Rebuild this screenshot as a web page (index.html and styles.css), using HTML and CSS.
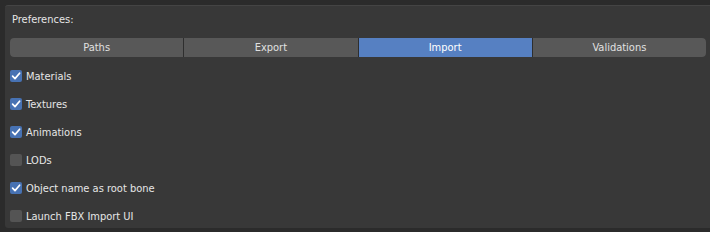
FILE: index.html
```html
<!DOCTYPE html>
<html lang="en">
<head>
    <meta charset="UTF-8">
    <title>Preferences</title>
    <link rel="stylesheet" href="styles.css">
</head>
<body>
    <div class="panel">
        <div class="title">Preferences:</div>
        <div class="tabs">
            <div class="tab">Paths</div>
            <div class="tab">Export</div>
            <div class="tab active">Import</div>
            <div class="tab">Validations</div>
        </div>
        <div class="options">
            <label class="option"><span class="box checked"><svg viewBox="0 0 12 12"><path d="M2.6 6.2 L5 8.6 L9.6 3.2" /></svg></span>Materials</label>
            <label class="option"><span class="box checked"><svg viewBox="0 0 12 12"><path d="M2.6 6.2 L5 8.6 L9.6 3.2" /></svg></span>Textures</label>
            <label class="option"><span class="box checked"><svg viewBox="0 0 12 12"><path d="M2.6 6.2 L5 8.6 L9.6 3.2" /></svg></span>Animations</label>
            <label class="option"><span class="box"></span>LODs</label>
            <label class="option"><span class="box checked"><svg viewBox="0 0 12 12"><path d="M2.6 6.2 L5 8.6 L9.6 3.2" /></svg></span>Object name as root bone</label>
            <label class="option"><span class="box"></span>Launch FBX Import UI</label>
        </div>
    </div>
</body>
</html>
```

FILE: styles.css
```css
body {
    margin: 0;
    padding: 5px 0 0 5px;
    background-color: #2b2b2b;
    font-family: "DejaVu Sans Condensed", "DejaVu Sans", sans-serif;
    font-size: 11px;
    color: #e6e6e6;
    height: 232px;
    box-sizing: border-box;
    overflow: hidden;
}
.panel {
    background-color: #383838;
    border-top: 1px solid #444444;
    border-radius: 3px 0 0 3px;
    height: 222px;
    padding: 0 4px 0 5px;
}
.title {
    height: 32px;
    line-height: 27px;
    padding-left: 2px;
}
.tabs {
    display: flex;
    gap: 1px;
    height: 19px;
    background-color: #2e2e2e;
    border-radius: 4px;
    overflow: hidden;
}
.tab {
    flex: 1;
    background-color: #585858;
    text-align: center;
    line-height: 19px;
    color: #e0e0e0;
}
.tab.active {
    background-color: #5680c2;
    color: #ffffff;
}
.options {
    padding-top: 5px;
}
.option {
    display: flex;
    align-items: center;
    height: 28px;
    gap: 4px;
}
.box {
    width: 12px;
    height: 12px;
    border-radius: 2px;
    background-color: #545454;
    display: inline-block;
}
.box.checked {
    background-color: #4772b3;
}
.box svg {
    width: 12px;
    height: 12px;
    display: block;
    fill: none;
    stroke: #ffffff;
    stroke-width: 1.7;
    stroke-linecap: round;
    stroke-linejoin: round;
}
```
